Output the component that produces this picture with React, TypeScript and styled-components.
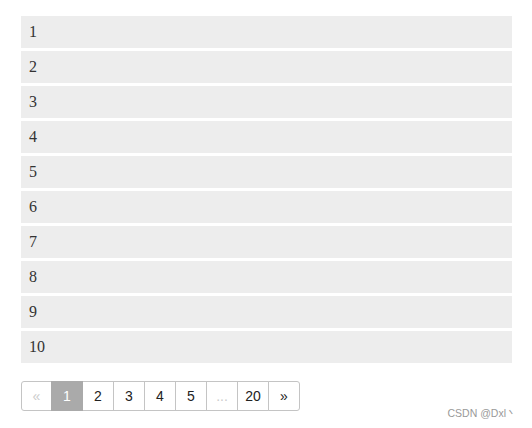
import styled, { createGlobalStyle } from 'styled-components';

const GlobalStyle = createGlobalStyle`
    body {
        margin: 0;
        background: #fff;
    }
`

const Page = styled.div`
    position: relative;
    width: 532px;
    height: 428px;
    padding: 16px 20px 0 21px;
    box-sizing: border-box;
`

const List = styled.div`
    display: flex;
    flex-direction: column;
    gap: 3px;
`

const Row = styled.div`
    height: 32px;
    display: flex;
    align-items: center;
    padding-left: 8px;
    background: #ededed;
    font-family: "Liberation Serif", serif;
    font-size: 16px;
    color: #333;
`

const Pager = styled.div`
    display: inline-flex;
    margin-top: 18px;
`

const Cell = styled.div<{ $active?: boolean; $muted?: boolean }>`
    width: 32px;
    height: 30px;
    box-sizing: border-box;
    margin-left: -1px;
    display: flex;
    align-items: center;
    justify-content: center;
    border: 1px solid ${p => p.$active ? '#aaa' : '#c4c4c4'};
    background: ${p => p.$active ? '#aaa' : '#fff'};
    color: ${p => p.$active ? '#fff' : p.$muted ? '#ccc' : '#222'};
    font-family: "Liberation Sans", Arial, sans-serif;
    font-size: 14px;
    position: relative;
    z-index: ${p => p.$active ? 1 : 0};

    &:first-child {
        margin-left: 0;
        width: 31px;
        border-radius: 3px 0 0 3px;
    }
    &:last-child {
        border-radius: 0 3px 3px 0;
    }
`

const Mark = styled.div`
    position: absolute;
    right: 15px;
    top: 407px;
    font-family: "Liberation Sans", Arial, sans-serif;
    font-size: 10.5px;
    color: #999;
`

const pages = [
    { label: '«', muted: true },
    { label: '1', active: true },
    { label: '2' },
    { label: '3' },
    { label: '4' },
    { label: '5' },
    { label: '...', muted: true },
    { label: '20' },
    { label: '»' },
]

export default function App() {
    const rows = Array.from({ length: 10 }, (_, i) => i + 1)
    return (
        <>
            <GlobalStyle />
            <Page>
                <List>
                    {rows.map(n => <Row key={n}>{n}</Row>)}
                </List>
                <Pager>
                    {pages.map((p, i) => (
                        <Cell key={i} $active={p.active} $muted={p.muted}>{p.label}</Cell>
                    ))}
                </Pager>
                <Mark>CSDN @Dxl丶</Mark>
            </Page>
        </>
    )
}
